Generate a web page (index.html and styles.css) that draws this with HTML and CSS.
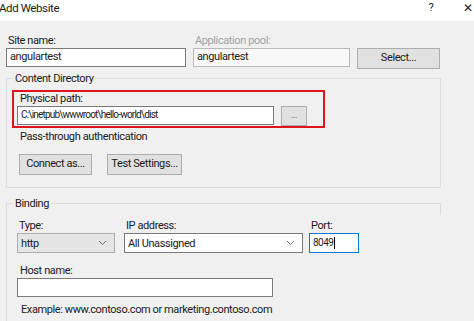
FILE: index.html
```html
<!DOCTYPE html>
<html>
<head>
<meta charset="utf-8">
<link rel="stylesheet" href="styles.css">
</head>
<body>
<div class="titlebar">
  <span class="title">Add Website</span>
  <span class="tb-icons"><span class="help">?</span><span class="close">✕</span></span>
</div>
<div class="content">
  <div class="row1">
    <div class="field site">
      <div class="label">Site name:</div>
      <div class="input">angulartest</div>
    </div>
    <div class="field pool">
      <div class="label disabled">Application pool:</div>
      <div class="input ro">angulartest</div>
    </div>
    <div class="btn select">Select...</div>
  </div>

  <div class="group cd">
    <div class="group-title">Content Directory</div>
    <div class="highlight">
      <div class="label pp">Physical path:</div>
      <div class="path-row">
        <div class="input path">C:\inetpub\wwwroot\hello-world\dist</div>
        <div class="btn dots">...</div>
      </div>
    </div>
    <div class="label pass">Pass-through authentication</div>
    <div class="btn-row">
      <div class="btn connect">Connect as...</div>
      <div class="btn test">Test Settings...</div>
    </div>
  </div>

  <div class="group binding">
    <div class="group-title">Binding</div>
    <div class="bind-row">
      <div class="field type">
        <div class="label">Type:</div>
        <div class="combo gray">http<svg class="chev" width="9" height="6" viewBox="0 0 9 6"><path d="M1 1l3.5 3.5L8 1" fill="none" stroke="#6a6a6a" stroke-width="1"/></svg></div>
      </div>
      <div class="field ip">
        <div class="label">IP address:</div>
        <div class="combo white">All Unassigned<svg class="chev" width="9" height="6" viewBox="0 0 9 6"><path d="M1 1l3.5 3.5L8 1" fill="none" stroke="#6a6a6a" stroke-width="1"/></svg></div>
      </div>
      <div class="field port">
        <div class="label">Port:</div>
        <div class="input portin">8049<span class="caret"></span></div>
      </div>
    </div>
    <div class="label host">Host name:</div>
    <div class="input hostin"></div>
    <div class="label example">Example: www.contoso.com or marketing.contoso.com</div>
  </div>
</div>
</body>
</html>
```
FILE: styles.css
```css
html, body {
  margin: 0;
  padding: 0;
}
body {
  width: 474px;
  height: 321px;
  overflow: hidden;
  background: #f0f0f0;
  font-family: Roboto, "Noto Sans", sans-serif;
  font-size: 11px;
  letter-spacing: -0.4px;
  color: #1a1a1a;
}
.titlebar {
  height: 21px;
  background: #ffffff;
  display: flex;
  align-items: center;
  justify-content: space-between;
}
.title {
  margin-left: -1px;
  line-height: 13px;
  margin-top: -5px;
  font-size: 11.5px;
}
.tb-icons {
  display: flex;
  align-items: center;
  margin-top: -6px;
}
.help {
  font-size: 11px;
  margin-right: 30px;
}
.close {
  font-size: 12px;
  color: #222;
  margin-right: 1px;
}
.content {
  padding-left: 6px;
}
.label {
  line-height: 13px;
  height: 14px;
}
.label.disabled {
  color: #a2a2a2;
}
.row1 {
  display: flex;
  align-items: flex-end;
  margin-top: 13px;
}
.field .label {
  padding-left: 2px;
}
.input {
  box-sizing: border-box;
  height: 19px;
  border: 1px solid #7a7a7a;
  background: #fff;
  line-height: 16px;
  padding-left: 3px;
  white-space: nowrap;
  overflow: hidden;
}
.site .input { width: 180px; }
.pool { margin-left: 7px; }
.pool .input {
  width: 157px;
  border-color: #b9b9b9;
  background: #f8f8f8;
}
.btn {
  box-sizing: border-box;
  background: #e1e1e1;
  border: 1px solid #adadad;
  height: 21px;
  line-height: 18px;
  text-align: center;
}
.select {
  width: 83px;
  margin-left: 7px;
  margin-bottom: -2px;
}
.group {
  box-sizing: border-box;
  width: 435px;
  border: 1px solid #dcdcdc;
}
.group-title {
  width: fit-content;
  margin-top: -7px;
  margin-left: 6px;
  padding: 0 2px;
  line-height: 13px;
  height: 13px;
  background: #f0f0f0;
}
.cd {
  margin-top: 11px;
  padding-bottom: 12px;
}
.highlight {
  box-sizing: border-box;
  width: 313px;
  margin-left: 5px;
  margin-top: 5px;
  border: 2px solid #e0141e;
  padding-left: 3px;
}
.pp { padding-left: 3px; }
.path-row {
  display: flex;
  height: 20px;
}
.path {
  width: 257px;
  font-size: 10px;
  letter-spacing: -0.8px;
}
.dots {
  width: 26px;
  height: 20px;
  margin-left: 7px;
  line-height: 16px;
  font-size: 9px;
  color: #444;
}
.pass {
  margin-top: 2px;
  margin-left: 13px;
}
.btn-row {
  display: flex;
  margin-top: 10px;
  margin-left: 12px;
}
.connect { width: 73px; }
.test { width: 75px; margin-left: 15px; }
.binding {
  margin-top: 15px;
  height: 130px;
  border-bottom: none;
  border-right-color: transparent;
  position: relative;
  padding-left: 10px;
}
.binding::after {
  content: "";
  position: absolute;
  right: -1px;
  top: -1px;
  width: 1px;
  height: 12px;
  background: #dcdcdc;
}
.binding .group-title { margin-left: -4px; }
.bind-row {
  display: flex;
  margin-top: 9px;
}
.combo {
  box-sizing: border-box;
  height: 20px;
  display: flex;
  align-items: center;
  justify-content: space-between;
  padding: 0 7px 0 3px;
}
.combo.gray {
  background: #e5e5e5;
  border: 1px solid #adadad;
}
.combo.white {
  background: #fff;
  border: 1px solid #7a7a7a;
}
.type .combo { width: 98px; }
.ip { margin-left: 9px; }
.ip .combo { width: 179px; }
.port { margin-left: 6px; }
.portin {
  width: 50px;
  height: 20px;
  border-color: #0078d7;
  display: flex;
  align-items: center;
  font-size: 10px;
  letter-spacing: -0.5px;
}
.caret {
  display: inline-block;
  width: 1px;
  height: 12px;
  background: #000;
  margin-left: 1px;
}
.host {
  margin-top: 11px;
  padding-left: 3px;
}
.hostin { width: 256px; }
.example {
  margin-top: 6px;
  padding-left: 4px;
}
```
